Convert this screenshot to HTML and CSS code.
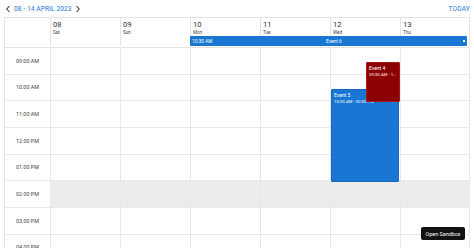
FILE: index.html
```html
<!DOCTYPE html>
<html>
<head>
<meta charset="utf-8">
<link rel="stylesheet" href="styles.css">
</head>
<body>
<div class="toolbar">
  <div class="nav">
    <svg class="chev" viewBox="0 0 6 8" width="6" height="8"><path d="M4.5 1 L1.8 4 L4.5 7" fill="none" stroke="#444" stroke-width="1.1"/></svg>
    <span class="range">08 - 14 APRIL 2023</span>
    <svg class="chev" viewBox="0 0 6 8" width="6" height="8"><path d="M1.5 1 L4.2 4 L1.5 7" fill="none" stroke="#444" stroke-width="1.1"/></svg>
  </div>
  <span class="today">TODAY</span>
</div>
<div class="cal">
  <div class="head">
    <div class="corner"></div>
    <div class="day"><span class="num">08</span><span class="name">Sat</span></div>
    <div class="day"><span class="num">09</span><span class="name">Sun</span></div>
    <div class="day"><span class="num">10</span><span class="name">Mon</span></div>
    <div class="day"><span class="num">11</span><span class="name">Tue</span></div>
    <div class="day"><span class="num">12</span><span class="name">Wed</span></div>
    <div class="day"><span class="num">13</span><span class="name">Thu</span></div>
    <div class="allday"><span class="ad-time">10:30 AM</span><span class="ad-title">Event 6</span><span class="ad-dot"></span></div>
  </div>
  <div class="body">
    <div class="time">09:00 AM</div><div class="cell"></div><div class="cell"></div><div class="cell"></div><div class="cell"></div><div class="cell"></div><div class="cell"></div>
    <div class="time">10:00 AM</div><div class="cell"></div><div class="cell"></div><div class="cell"></div><div class="cell"></div><div class="cell"></div><div class="cell"></div>
    <div class="time">11:00 AM</div><div class="cell"></div><div class="cell"></div><div class="cell"></div><div class="cell"></div><div class="cell"></div><div class="cell"></div>
    <div class="time">12:00 PM</div><div class="cell"></div><div class="cell"></div><div class="cell"></div><div class="cell"></div><div class="cell"></div><div class="cell"></div>
    <div class="time">01:00 PM</div><div class="cell"></div><div class="cell"></div><div class="cell"></div><div class="cell"></div><div class="cell"></div><div class="cell"></div>
    <div class="time">02:00 PM</div><div class="cell off"></div><div class="cell off"></div><div class="cell off"></div><div class="cell off"></div><div class="cell off"></div><div class="cell off"></div>
    <div class="time">03:00 PM</div><div class="cell"></div><div class="cell"></div><div class="cell"></div><div class="cell"></div><div class="cell"></div><div class="cell"></div>
    <div class="time">04:00 PM</div><div class="cell"></div><div class="cell"></div><div class="cell"></div><div class="cell"></div><div class="cell"></div><div class="cell"></div>
    <div class="event ev5"><span class="ev-title">Event 5</span><span class="ev-time">10:30 AM - 02:00 PM</span></div>
    <div class="event ev4"><span class="ev-title">Event 4</span><span class="ev-time">09:30 AM - 11:00 AM</span></div>
  </div>
</div>
<div class="sandbox">Open Sandbox</div>
</body>
</html>
```
FILE: styles.css
```css
html, body {
  margin: 0;
  padding: 0;
  background: #fff;
  font-family: Roboto, "Liberation Sans", sans-serif;
  overflow: hidden;
}
.toolbar {
  height: 17px;
  display: flex;
  align-items: center;
  justify-content: space-between;
  padding: 0 4px 0 5px;
}
.nav {
  display: flex;
  align-items: center;
  gap: 3px;
}
.range {
  color: #1976d2;
  font-size: 6.6px;
  letter-spacing: 0.1px;
}
.today {
  color: #1976d2;
  font-size: 6.6px;
  letter-spacing: 0.2px;
}
.cal {
  margin-left: 4px;
  width: 466px;
}
.head {
  display: grid;
  grid-template-columns: 45px repeat(6, 70px);
  grid-template-rows: 18px 10px;
  padding-bottom: 1px;
  border-top: 1px solid #e4e4e4;
  border-bottom: 1px solid #e4e4e4;
  border-left: 1px solid #e4e4e4;
  width: 465px;
}
.head > :nth-child(1) { grid-column: 1; }
.head > :nth-child(2) { grid-column: 2; }
.head > :nth-child(3) { grid-column: 3; }
.head > :nth-child(4) { grid-column: 4; }
.head > :nth-child(5) { grid-column: 5; }
.head > :nth-child(6) { grid-column: 6; }
.head > :nth-child(7) { grid-column: 7; }
.corner {
  grid-row: 1 / 3;
}
.day {
  grid-row: 1 / 3;
  border-left: 1px solid #e4e4e4;
  display: flex;
  flex-direction: column;
  padding: 2px 0 0 2px;
  min-width: 0;
}
.head > .day:nth-child(7) { border-right: 1px solid #e4e4e4; }
.num {
  font-size: 7.6px;
  line-height: 9px;
  color: #333;
}
.name {
  font-size: 4.6px;
  line-height: 7px;
  color: #444;
}
.head > .allday {
  grid-row: 2;
  grid-column: 4 / 8;
  margin-right: 3px;
  background: #1976d2;
  border-radius: 1px;
  display: flex;
  align-items: center;
  position: relative;
  color: #fff;
  font-size: 4.8px;
  padding-left: 2px;
  z-index: 1;
}
.ad-title {
  position: absolute;
  left: 136px;
}
.ad-dot {
  position: absolute;
  right: 2px;
  width: 2px;
  height: 2px;
  background: #fff;
}
.body {
  position: relative;
  display: grid;
  grid-template-columns: 45px repeat(6, 70px);
  grid-auto-rows: 26.67px;
  border-left: 1px solid #e4e4e4;
  width: 465px;
}
.time, .cell {
  border-bottom: 1px solid #e8e8e8;
  box-sizing: border-box;
}
.time {
  display: flex;
  align-items: center;
  justify-content: center;
  font-size: 5.4px;
  color: #444;
}
.cell {
  border-left: 1px solid #e8e8e8;
}
.cell:nth-child(7n) { border-right: 1px solid #e8e8e8; }
.cell.off { background: #ececec; }
.event {
  position: absolute;
  box-sizing: border-box;
  color: #fff;
  padding: 2px 2px;
  display: flex;
  flex-direction: column;
  overflow: hidden;
  border-radius: 1px;
}
.ev-title {
  font-size: 5px;
  line-height: 7px;
  white-space: nowrap;
}
.ev-time {
  font-size: 4.3px;
  line-height: 6px;
  white-space: nowrap;
  overflow: hidden;
  text-overflow: ellipsis;
}
.ev5 {
  left: 326px;
  top: 41px;
  width: 68px;
  height: 93px;
  background: #1976d2;
  border: 1px solid #1669bf;
}
.ev4 {
  left: 361px;
  top: 14px;
  width: 34px;
  height: 40px;
  background: #8b0000;
  border: 1px solid #a01818;
}
.sandbox {
  position: fixed;
  left: 421px;
  top: 227px;
  width: 44px;
  height: 13px;
  background: #111;
  color: #fff;
  border-radius: 2px;
  font-size: 5.4px;
  display: flex;
  align-items: center;
  justify-content: center;
}
```
